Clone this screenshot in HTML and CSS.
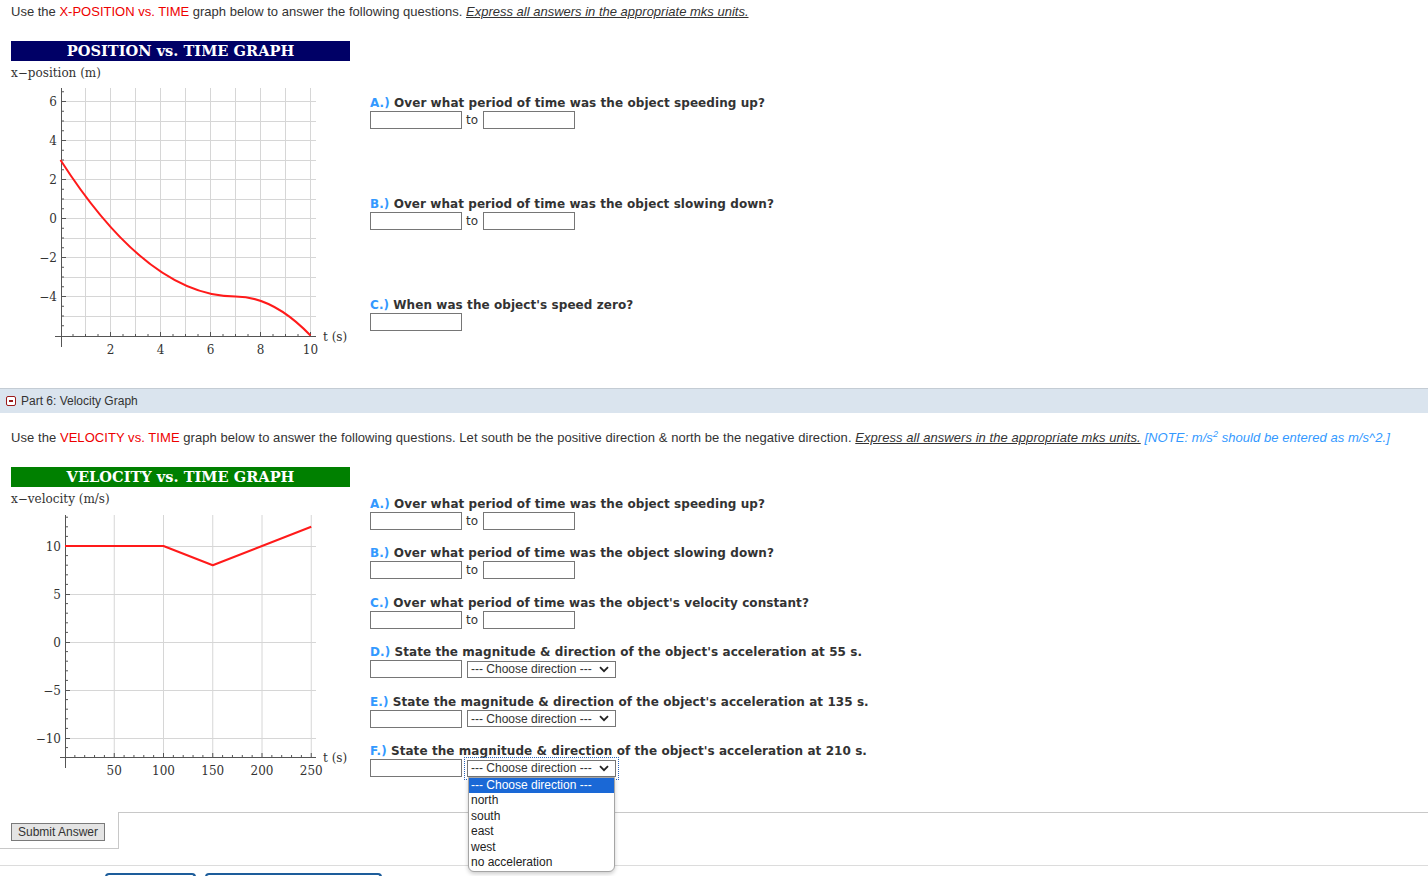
FILE: index.html
```html
<!DOCTYPE html>
<html>
<head>
<meta charset="utf-8">
<title>Position and Velocity Graphs</title>
<link rel="stylesheet" href="styles.css">
</head>
<body>
<section class="part part-pos">
  <p class="intro">Use the <span class="hl">X-POSITION vs. TIME</span> graph below to answer the following questions. <em class="u">Express all answers in the appropriate mks units.</em></p>
  <div class="row">
    <div class="graph">
      <div class="gtitle navy">POSITION vs. TIME GRAPH</div>
      <div class="axis-label">x−position (m)</div>
      <svg class="chart" width="345" height="280" viewBox="11 82 345 280">
        <path class="grid" d="M85.5 88V336M110.5 88V336M135.5 88V336M160.5 88V336M185.5 88V336M210.5 88V336M235.5 88V336M260.5 88V336M285.5 88V336M310.5 88V336"/>
        <path class="grid" d="M62 101.5H316M62 121.5H316M62 140.5H316M62 160.5H316M62 179.5H316M62 199.5H316M62 218.5H316M62 238.5H316M62 257.5H316M62 277.5H316M62 296.5H316M62 316.5H316"/>
        <path class="axis" d="M61.5 88V347M55 336.5H316"/>
        <path class="axis" d="M62 91.75h2M62 111.25h2M62 121h2M62 130.75h2M62 150.25h2M62 160h2M62 169.75h2M62 189.25h2M62 199h2M62 208.75h2M62 228.25h2M62 238h2M62 247.75h2M62 267.25h2M62 277h2M62 286.75h2M62 306.25h2M62 316h2M62 325.75h2"/>
        <path class="axis" d="M62 101.5h4M62 140.5h4M62 179.5h4M62 218.5h4M62 257.5h4M62 296.5h4"/>
        <path class="axis" d="M73 336v-2M85.5 336v-2M98 336v-2M123 336v-2M135.5 336v-2M148 336v-2M173 336v-2M185.5 336v-2M198 336v-2M223 336v-2M235.5 336v-2M248 336v-2M273 336v-2M285.5 336v-2M298 336v-2"/>
        <path class="axis" d="M110.5 336v-4M160.5 336v-4M210.5 336v-4M260.5 336v-4M310.5 336v-4"/>
        <g class="lbl ylbl">
          <text x="57" y="102">6</text>
          <text x="57" y="141">4</text>
          <text x="57" y="180">2</text>
          <text x="57" y="219">0</text>
          <text x="57" y="258">−2</text>
          <text x="57" y="297">−4</text>
        </g>
        <g class="lbl xlbl">
          <text x="110.5" y="349.5">2</text>
          <text x="160.5" y="349.5">4</text>
          <text x="210.5" y="349.5">6</text>
          <text x="260.5" y="349.5">8</text>
          <text x="310.5" y="349.5">10</text>
        </g>
        <text class="lbl tlbl" x="323" y="337">t (s)</text>
        <path class="curve" d="M60.5 160Q148 296.5 235.5 296.5Q273 296.5 310.5 335.5"/>
      </svg>
    </div>
    <div class="questions wide">
      <div class="q">
        <div class="qt"><span class="ql">A.)</span> Over what period of time was the object speeding up?</div>
        <div class="qa"><input class="box" type="text"><span class="to">to</span><input class="box" type="text"></div>
      </div>
      <div class="q">
        <div class="qt"><span class="ql">B.)</span> Over what period of time was the object slowing down?</div>
        <div class="qa"><input class="box" type="text"><span class="to">to</span><input class="box" type="text"></div>
      </div>
      <div class="q">
        <div class="qt"><span class="ql">C.)</span> When was the object's speed zero?</div>
        <div class="qa"><input class="box" type="text"></div>
      </div>
    </div>
  </div>
</section>

<div class="part-head">
  <span class="collapse"><span class="minus"></span></span>
  <span>Part 6: Velocity Graph</span>
</div>

<section class="part part-vel">
  <p class="intro">Use the <span class="hl">VELOCITY vs. TIME</span> graph below to answer the following questions. Let south be the positive direction &amp; north be the negative direction. <em class="u">Express all answers in the appropriate mks units.</em> <em class="note">[NOTE: m/s<sup>2</sup> should be entered as m/s^2.]</em></p>
  <div class="row">
    <div class="graph">
      <div class="gtitle green">VELOCITY vs. TIME GRAPH</div>
      <div class="axis-label">x−velocity (m/s)</div>
      <svg class="chart" width="345" height="277" viewBox="11 508 345 277">
        <path class="grid" d="M114.25 515V757M163.5 515V757M212.75 515V757M262 515V757M311.25 515V757"/>
        <path class="grid" d="M66 546.5H316M66 594.5H316M66 642.5H316M66 690.5H316M66 738.5H316"/>
        <path class="axis" d="M65.5 515V768M60 757.5H316"/>
        <path class="axis" d="M66 517.2h2M66 526.8h2M66 536.4h2M66 555.6h2M66 565.2h2M66 574.8h2M66 584.4h2M66 603.6h2M66 613.2h2M66 622.8h2M66 632.4h2M66 651.6h2M66 661.2h2M66 670.8h2M66 680.4h2M66 699.6h2M66 709.2h2M66 718.8h2M66 728.4h2M66 747.6h2"/>
        <path class="axis" d="M66 546.5h4M66 594.5h4M66 642.5h4M66 690.5h4M66 738.5h4"/>
        <path class="axis" d="M74.85 757v-2M84.7 757v-2M94.55 757v-2M104.4 757v-2M124.1 757v-2M133.95 757v-2M143.8 757v-2M153.65 757v-2M173.35 757v-2M183.2 757v-2M193.05 757v-2M202.9 757v-2M222.6 757v-2M232.45 757v-2M242.3 757v-2M252.15 757v-2M271.85 757v-2M281.7 757v-2M291.55 757v-2M301.4 757v-2"/>
        <path class="axis" d="M114.25 757v-4M163.5 757v-4M212.75 757v-4M262 757v-4M311.25 757v-4"/>
        <g class="lbl ylbl">
          <text x="61" y="547">10</text>
          <text x="61" y="595">5</text>
          <text x="61" y="643">0</text>
          <text x="61" y="691">−5</text>
          <text x="61" y="739">−10</text>
        </g>
        <g class="lbl xlbl">
          <text x="114.25" y="770.5">50</text>
          <text x="163.5" y="770.5">100</text>
          <text x="212.75" y="770.5">150</text>
          <text x="262" y="770.5">200</text>
          <text x="311.25" y="770.5">250</text>
        </g>
        <text class="lbl tlbl" x="323" y="758">t (s)</text>
        <path class="curve" d="M65 546L163.5 546L212.75 565.2L311.25 526.8"/>
      </svg>
    </div>
    <div class="questions tight">
      <div class="q">
        <div class="qt"><span class="ql">A.)</span> Over what period of time was the object speeding up?</div>
        <div class="qa"><input class="box" type="text"><span class="to">to</span><input class="box" type="text"></div>
      </div>
      <div class="q">
        <div class="qt"><span class="ql">B.)</span> Over what period of time was the object slowing down?</div>
        <div class="qa"><input class="box" type="text"><span class="to">to</span><input class="box" type="text"></div>
      </div>
      <div class="q">
        <div class="qt"><span class="ql">C.)</span> Over what period of time was the object's velocity constant?</div>
        <div class="qa"><input class="box" type="text"><span class="to">to</span><input class="box" type="text"></div>
      </div>
      <div class="q">
        <div class="qt"><span class="ql">D.)</span> State the magnitude &amp; direction of the object's acceleration at 55 s.</div>
        <div class="qa"><input class="box" type="text">
          <div class="select"><span>--- Choose direction ---</span><svg class="chev" width="10" height="7" viewBox="0 0 10 7"><path d="M1 1.2l4 4 4-4"/></svg></div>
        </div>
      </div>
      <div class="q">
        <div class="qt"><span class="ql">E.)</span> State the magnitude &amp; direction of the object's acceleration at 135 s.</div>
        <div class="qa"><input class="box" type="text">
          <div class="select"><span>--- Choose direction ---</span><svg class="chev" width="10" height="7" viewBox="0 0 10 7"><path d="M1 1.2l4 4 4-4"/></svg></div>
        </div>
      </div>
      <div class="q">
        <div class="qt"><span class="ql">F.)</span> State the magnitude &amp; direction of the object's acceleration at 210 s.</div>
        <div class="qa"><input class="box" type="text">
          <div class="select focus"><span>--- Choose direction ---</span><svg class="chev" width="10" height="7" viewBox="0 0 10 7"><path d="M1 1.2l4 4 4-4"/></svg>
            <div class="dropdown">
              <div class="opt on">--- Choose direction ---</div>
              <div class="opt">north</div>
              <div class="opt">south</div>
              <div class="opt">east</div>
              <div class="opt">west</div>
              <div class="opt">no acceleration</div>
            </div>
          </div>
        </div>
      </div>
    </div>
  </div>
</section>

<div class="submit-row">
  <div class="tab"><button class="btn" type="button">Submit Answer</button></div>
  <div class="rest"></div>
</div>
<div class="footer-line">
  <span class="pill pill-a"></span>
  <span class="pill pill-b"></span>
</div>
</body>
</html>
```
FILE: styles.css
```css
* { box-sizing: border-box; }

html { overflow: hidden; }

body {
  margin: 0;
  width: 1428px;
  background: #fff;
  color: #333;
  font-family: "Liberation Sans", Arial, sans-serif;
  overflow: hidden;
}

.part { padding: 5px 11px 26px; }
.part-vel { padding: 18px 11px 27px; }

.intro {
  margin: 0;
  font-size: 13px;
  line-height: 14px;
  color: #333;
  white-space: nowrap;
}
.part-vel .intro { letter-spacing: 0.06px; }
.hl { color: #ee0000; }
.u { font-style: italic; text-decoration: underline; }
.note { color: #3399ff; font-style: italic; }
.note sup { font-size: 9px; line-height: 0; vertical-align: baseline; position: relative; top: -5px; }

.row { display: flex; gap: 20px; margin-top: 22px; }

.graph { width: 339px; flex: none; }

.gtitle {
  height: 20px;
  line-height: 20px;
  text-align: center;
  color: #fff;
  font-family: "DejaVu Serif", serif;
  font-weight: bold;
  font-size: 14.6px;
}
.navy { background: #000066; }
.green { background: #008000; }

.axis-label {
  height: 21px;
  padding-top: 4px;
  font-family: "DejaVu Serif", serif;
  font-size: 12px;
  line-height: 17px;
  color: #333;
}

.chart { display: block; }
.grid { stroke: #d6d6d6; stroke-width: 1; fill: none; }
.axis { stroke: #555; stroke-width: 1; fill: none; }
.curve { stroke: #ff1a1a; stroke-width: 2; fill: none; stroke-linejoin: round; }
.lbl { font-family: "DejaVu Serif", serif; font-size: 12px; fill: #333; dominant-baseline: central; }
.ylbl { text-anchor: end; }
.xlbl { text-anchor: middle; }

.questions { font-family: "DejaVu Sans", Verdana, sans-serif; color: #333; }
.questions.wide { padding-top: 54.5px; }
.questions.wide .q + .q { margin-top: 68px; }
.questions.tight { padding-top: 29.5px; }
.questions.tight .q + .q { margin-top: 16.6px; }

.qt {
  font-size: 12px;
  font-weight: bold;
  line-height: 15px;
  letter-spacing: 0.07px;
  white-space: nowrap;
  color: #333;
}
.ql { color: #3399ff; }

.qa { display: flex; align-items: center; height: 18px; }

.box {
  width: 92px;
  height: 18px;
  margin: 0;
  padding: 0 2px;
  border: 1px solid #767676;
  background: #fff;
  font: 12px "Liberation Sans", Arial, sans-serif;
}

.to {
  margin: 0 5px 0 4px;
  font-family: "DejaVu Sans", Verdana, sans-serif;
  font-size: 12px;
  color: #333;
}

.select {
  position: relative;
  display: flex;
  align-items: center;
  justify-content: space-between;
  width: 149px;
  height: 17px;
  margin-left: 5px;
  padding: 0 6px 0 3px;
  border: 1px solid #767676;
  background: #fff;
  font-family: "Liberation Sans", Arial, sans-serif;
  font-size: 12px;
  color: #333;
  white-space: nowrap;
}
.select.focus { outline: 1px dotted #2a62b8; outline-offset: 2px; }
.chev path { fill: none; stroke: #222; stroke-width: 1.8; }

.dropdown {
  position: absolute;
  top: 16px;
  left: 0;
  width: 147px;
  height: 95px;
  background: #fff;
  border: 1px solid #a5a5a5;
  border-radius: 0 0 6px 6px;
  box-shadow: 0 2px 4px rgba(0, 0, 0, 0.2);
  overflow: hidden;
  z-index: 10;
  color: #222;
}
.opt { height: 15.5px; line-height: 15.5px; padding-left: 2px; }
.opt.on { background: #1a68d6; color: #fff; }

.part-head {
  display: flex;
  align-items: center;
  gap: 5px;
  height: 25px;
  padding-left: 6px;
  border-top: 1px solid #c4ccd4;
  background: #dae4ee;
  font-size: 12px;
  color: #333;
}
.collapse {
  position: relative;
  width: 10px;
  height: 10px;
  border: 1px solid #9b1b1b;
  border-radius: 2px;
  background: #fff;
}
.minus {
  position: absolute;
  left: 2px;
  top: 3px;
  width: 4px;
  height: 2px;
  background: #9b1b1b;
}

.submit-row { display: flex; }
.tab {
  width: 119px;
  height: 37px;
  padding: 11px 0 0 11px;
  border-right: 1px solid #c8c8c8;
  border-bottom: 1px solid #c8c8c8;
}
.rest { flex: 1; border-top: 1px solid #c8c8c8; }

.btn {
  display: block;
  width: 94px;
  height: 18px;
  margin: 0;
  padding: 0;
  border: 1px solid #7a7a7a;
  background: #e4e4e4;
  color: #333;
  font: 12px "Liberation Sans", Arial, sans-serif;
}

.footer-line {
  display: flex;
  gap: 9px;
  margin-top: 16px;
  padding: 7px 0 0 105px;
  border-top: 1px solid #dcdcdc;
}
.pill {
  height: 10px;
  border: 2px solid #1d5d9b;
  border-bottom: none;
  border-radius: 4px 4px 0 0;
}
.pill-a { width: 91px; }
.pill-b { width: 177px; }
```
